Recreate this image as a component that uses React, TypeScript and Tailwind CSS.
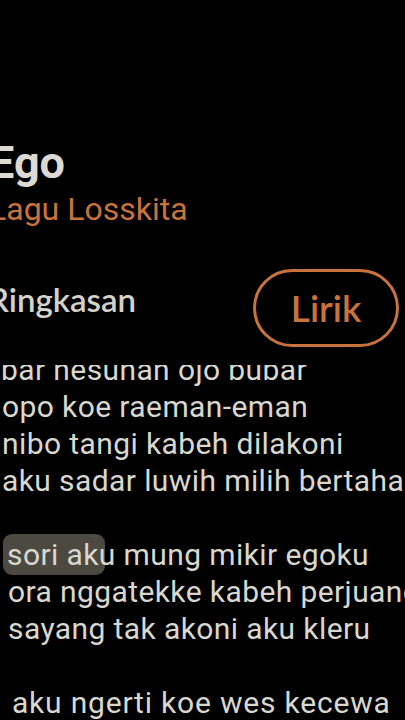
export default function App() {
  const firstBlock = [
    "opo koe raeman-eman",
    "nibo tangi kabeh dilakoni",
    "aku sadar luwih milih bertahan",
  ]
  const secondBlock = ["ora nggatekke kabeh perjuangan", "sayang tak akoni aku kleru"]

  return (
    <div className="h-[720px] w-[405px] overflow-hidden bg-black font-['Roboto','Liberation_Sans',sans-serif] text-[#d9d7ce]">
      {/* header */}
      <div className="ml-[-11px] pt-[137px]">
        <h1 className="text-[45px] font-bold leading-[52px] text-[#dcdad2]">Ego</h1>
        <p className="mt-[2px] text-[32px] leading-[37px] text-[#c8733c]">Lagu Losskita</p>
      </div>

      {/* tabs */}
      <div className="mt-[41px] flex items-center justify-between pr-[6px] font-['Lato','Open_Sans',sans-serif]">
        <span className="ml-[-12px] mb-[16px] text-[33px] font-semibold text-[#d4d2c9]">Ringkasan</span>
        <button className="flex h-[78px] w-[146px] items-center justify-center rounded-full border-[3px] border-[#c8733c] text-[37px] font-semibold text-[#c8733c]">
          Lirik
        </button>
      </div>

      {/* lyrics */}
      <div className="mt-[18px] h-[400px] overflow-hidden whitespace-nowrap text-[30px] leading-[37px] tracking-[0.4px]">
        <div className="mt-[-14px]">
          <p className="pl-[1px]">bar nesuhan ojo bubar</p>
          {firstBlock.map((line) => (
            <p key={line} className="pl-[2px]">
              {line}
            </p>
          ))}
          <p>&nbsp;</p>
          <p className="relative pl-[7px]">
            <span className="absolute left-[3px] top-[-2px] h-[41px] w-[102px] rounded-[9px] bg-[#4b4940]" />
            <span className="relative">sori aku mung mikir egoku</span>
          </p>
          {secondBlock.map((line) => (
            <p key={line} className="pl-[8px]">
              {line}
            </p>
          ))}
          <p>&nbsp;</p>
          <p className="pl-[12px] tracking-[0.8px]">aku ngerti koe wes kecewa</p>
        </div>
      </div>
    </div>
  )
}
